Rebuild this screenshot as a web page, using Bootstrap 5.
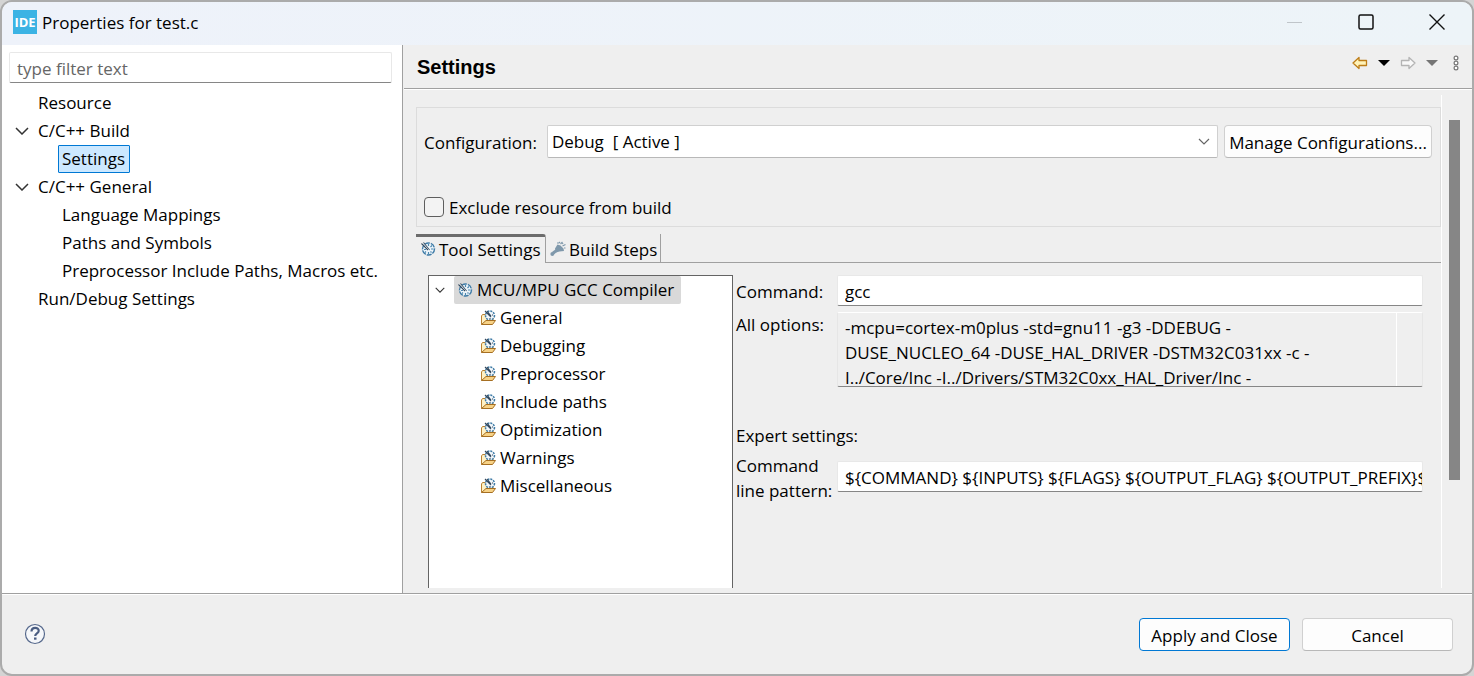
<!DOCTYPE html>
<html lang="en">
<head>
<meta charset="utf-8">
<meta name="viewport" content="width=device-width, initial-scale=1">
<title>Properties for test.c</title>
<link href="https://cdn.jsdelivr.net/npm/bootstrap@5.3.0/dist/css/bootstrap.min.css" rel="stylesheet">
<style>
  body { font-family: "Open Sans", "Noto Sans", sans-serif; font-size: 17px; line-height: 25px; color: #000; background: #d4d4d4; }
  svg { display: block; flex: none; }
  .window { min-height: 100vh; border: 2px solid #ababab; border-radius: 12px; background: #efefef; overflow: hidden; }
  .titlebar { height: 43px; padding: 0 0 3px 11px; background: linear-gradient(90deg, #eef2fa, #edf4f8); }
  .ide-logo { width: 24px; height: 24px; margin-right: 5px; background: #3bb3e4; color: #fff; font: bold 13px/24px "Open Sans", sans-serif; text-align: center; }
  .plain { border: 0; background: none; padding: 0; color: inherit; }
  .win-btn { width: 71px; height: 40px; display: flex; align-items: center; justify-content: center; }
  .sidebar { width: 401px; background: #fff; border-right: 1px solid #a0a0a0; padding: 7px 10px 0 7px; }
  .field { border: 1px solid #e8e8e8; border-bottom-color: #868686; border-radius: 2px; background: #fff; color: #000; width: 100%; height: 31px; padding: 2px 0 0 7px; outline: 0; }
  .field::placeholder { color: #666; opacity: 1; }
  .tree, .tree ul { list-style: none; margin: 0; padding: 0; }
  .pages { padding-top: 6px; }
  .tree-row { height: 28px; display: flex; align-items: center; }
  .tree-row a { color: #000; text-decoration: none; padding: 0 4px; line-height: 28px; white-space: nowrap; }
  .tree-row a.chosen { background: #cce8ff; line-height: 26px; border: 1px solid #0078d4; border-radius: 1px; padding: 0 4px 0 3px; }
  .twisty { width: 25px; padding-left: 1px; display: flex; justify-content: center; }
  .lvl-2 { padding-left: 49px; }
  .pane-head { height: 44px; border-bottom: 1px solid #a0a0a0; box-shadow: 0 1px #fff; padding: 1px 8px 0 13px; margin-left: 1px; }
  .pane-head h1 { font: bold 20px/24px "Liberation Sans", Arial, sans-serif; margin: 0; }
  .content { border-right: 1px solid #fff; margin: 6px 0 5px; padding: 12px 0 0 13px; }
  .group { border: 1px solid #dcdcdc; height: 120px; padding: 17px 8px 0 7px; }
  .group label { padding-top: 2px; }
  .combo { appearance: none; height: 33px; border: 1px solid #d0d0d0; border-bottom-color: #b8b8b8; border-radius: 2px; color: #000; padding: 0 4px; width: 100%; margin: 0 6px 0 10px;
    background: #fff url("data:image/svg+xml,%3Csvg xmlns='http://www.w3.org/2000/svg' width='12' height='8'%3E%3Cpath d='M1 1l5 5 5-5' fill='none' stroke='%23666' stroke-width='1.2'/%3E%3C/svg%3E") no-repeat right 7px center; }
  .push { height: 33px; border: 1px solid #d0d0d0; border-bottom-color: #b8b8b8; border-radius: 4px; background: #fdfdfd; color: #000; padding: 2px 0 0; line-height: 25px; white-space: nowrap; }
  .push-primary { border-color: #0078d4; }
  .w-config { width: 208px; }
  .w-action { width: 151px; }
  .exclude-row { margin-top: 35px; gap: 5px; }
  .tick { appearance: none; width: 20px; height: 20px; border: 1px solid #5e5e5e; border-radius: 4px; background: #f3f3f3; margin: 0; }
  .tabs { height: 29px; margin-top: 7px; }
  .tab { display: flex; align-items: center; gap: 3px; white-space: nowrap; border-right: 1px solid #a0a0a0; border-bottom: 1px solid #a0a0a0; }
  .tab-on { width: 130px; border-top: 3px solid #6c6c6c; border-bottom: 0; border-top-right-radius: 3px; padding: 0 0 2px 4px; }
  .tab-off { width: 115px; padding: 2px 0 0 4px; }
  .tab-rest { border-bottom: 1px solid #a0a0a0; }
  .tool-area { padding: 12px 0 0 12px; }
  .tools { width: 305px; height: 313px; background: #fff; border: 1px solid #646464; border-bottom: 0; }
  .tools .lvl-2 { padding-left: 51px; }
  .tool-root { background: #d9d9d9; border-radius: 2px; height: 28px; width: 227px; padding-left: 3px; }
  .form-grid { display: grid; grid-template-columns: 99px minmax(0, 1fr); column-gap: 2px; padding: 0 18px 0 3px; align-content: start; }
  .opts-label { padding-top: 6px; }
  .options { border: 1px solid #e6e6e6; border-top-color: #fff; border-bottom-color: #868686; border-radius: 2px; height: 75px; margin-top: 6px; }
  .options textarea { border: 0; border-right: 1px solid #fff; background: none; resize: none; overflow: hidden; white-space: pre; padding: 2px 7px 0; outline: 0; color: #000; }
  .options .gutter { width: 25px; }
  .expert { grid-column: 1 / -1; margin: 36px 0 5px; }
  .pattern-cell { padding-top: 8px; }
  .track { width: 30px; padding: 31px 0 0 7px; }
  .thumb { width: 11px; height: 360px; background: #868686; }
  .footer-bar { height: 81px; border-top: 1px solid #a0a0a0; box-shadow: inset 0 1px #fff; padding: 0 19px 0 22px; gap: 12px; }
</style>
</head>
<body>
<svg width="0" height="0" class="position-absolute" aria-hidden="true">
  <symbol id="dial" viewBox="0 0 16 16">
    <circle cx="8.500" cy="8" r="6" fill="#eef5fa" stroke="#3f7ba6" stroke-width="1.400" stroke-dasharray="5 1"/>
    <path d="M8.500 3v2M8.500 11v2.500M4 8.500h2M11 8h2.500M12 4.500l-1.500 1.500M11.500 11.500l-1-1M5 11.500l1-1" stroke="#4b87b0" stroke-width="1.200"/>
    <path d="M1.500 2.500L8 9M3.500 1.500l6 7.500" stroke="#34495e" stroke-width="1.100"/>
    <path d="M2.500 2l7 7.500" stroke="#dce6ee" stroke-width=".6"/>
  </symbol>
  <symbol id="folder" viewBox="0 0 16 16">
    <path d="M1.500 14.500V6l1-1.500h3L7 6h6v4" fill="#fff1c4" stroke="#b98132"/>
    <circle cx="10" cy="5.500" r="4.500" fill="#f2f7fb" stroke="#3f7ba6" stroke-width="1.500" stroke-dasharray="2 1"/>
    <path d="M5 1l6 6M7 1l4 5M10 8v1M12 5h1" stroke="#34495e" stroke-width="1.100"/>
    <path d="M1.500 14.500L6 10.500h9.500l-3 4z" fill="#f7d286" stroke="#a66f22"/>
  </symbol>
  <symbol id="hammer" viewBox="0 0 16 16">
    <circle cx="2.300" cy="13" r="1.900" fill="#7f98ab"/>
    <path d="M2 11l4-3 2 2-4 3.500z" fill="#7f98ab"/>
    <path d="M5 7.500L7.500 3.500l3 1 3 3 .500 2.500-4.500.500-3.500 1z" fill="#7f98ab"/>
    <path d="M7 2h2l1-1M10.500 3l1.500-1.500 1 1.500M12.500 5l3-1.500M14 7h1.500" fill="none" stroke="#7f98ab" stroke-width="1.200"/>
  </symbol>
  <symbol id="chev" viewBox="0 0 14 8"><path d="M1 1l6 6 6-6" fill="none" stroke="#333" stroke-width="1.500"/></symbol>
  <symbol id="arrow" viewBox="0 0 16 14"><path d="M1 7l6-5.500v3h7.500v5H7v3z" stroke-width="1.300" stroke-linejoin="round"/></symbol>
</svg>

<div class="window d-flex flex-column">
  <header class="titlebar d-flex align-items-center">
    <div class="ide-logo">IDE</div>
    <span class="me-auto">Properties for test.c</span>
    <button class="plain win-btn" aria-label="Minimize"><svg width="16" height="16"><path d="M0 8.500h15" stroke="#c0c5ca"/></svg></button>
    <button class="plain win-btn" aria-label="Maximize"><svg width="16" height="16"><rect x="1" y="1" width="14" height="14" rx="1.500" fill="none" stroke="#111" stroke-width="1.500"/></svg></button>
    <button class="plain win-btn" aria-label="Close"><svg width="16" height="16"><path d="M.500 .500l15 15M15.500 .500l-15 15" stroke="#111" stroke-width="1.400"/></svg></button>
  </header>

  <div class="d-flex flex-grow-1">
    <nav class="sidebar flex-shrink-0" aria-label="Property pages">
      <input class="field" type="text" placeholder="type filter text" aria-label="Filter">
      <ul class="tree pages">
        <li class="tree-row"><span class="twisty"></span><a href="#">Resource</a></li>
        <li>
          <div class="tree-row"><span class="twisty"><svg width="14" height="8"><use href="#chev"/></svg></span><a href="#">C/C++ Build</a></div>
          <ul><li class="tree-row lvl-2"><a href="#" class="chosen">Settings</a></li></ul>
        </li>
        <li>
          <div class="tree-row"><span class="twisty"><svg width="14" height="8"><use href="#chev"/></svg></span><a href="#">C/C++ General</a></div>
          <ul>
            <li class="tree-row lvl-2"><a href="#">Language Mappings</a></li>
            <li class="tree-row lvl-2"><a href="#">Paths and Symbols</a></li>
            <li class="tree-row lvl-2"><a href="#">Preprocessor Include Paths, Macros etc.</a></li>
          </ul>
        </li>
        <li class="tree-row"><span class="twisty"></span><a href="#">Run/Debug Settings</a></li>
      </ul>
    </nav>

    <main class="flex-grow-1 d-flex flex-column">
      <div class="pane-head d-flex align-items-center">
        <h1 class="me-auto">Settings</h1>
        <div class="d-flex align-items-center pb-2">
          <button class="plain" aria-label="Back"><svg width="16" height="14" fill="#fff3b8" stroke="#bd7d18"><use href="#arrow"/></svg></button>
          <button class="plain ms-2" aria-label="Back history"><svg width="16" height="8"><path d="M2 1h12L8 7z"/></svg></button>
          <button class="plain ms-2" aria-label="Forward"><svg width="16" height="14" fill="#f8f8f8" stroke="#b4b4b4"><g transform="matrix(-1 0 0 1 16 0)"><use href="#arrow"/></g></svg></button>
          <button class="plain ms-2" aria-label="Forward history"><svg width="16" height="8"><path d="M2 1h12L8 7z" fill="#757575"/></svg></button>
          <button class="plain ms-2" aria-label="Menu"><svg width="16" height="16" fill="#fff" stroke="#777" stroke-width="1.200"><circle cx="8" cy="3" r="1.900"/><circle cx="8" cy="8" r="1.900"/><circle cx="8" cy="13" r="1.900"/></svg></button>
        </div>
      </div>

      <div class="d-flex flex-grow-1">
        <div class="content flex-grow-1">
          <div class="group">
            <div class="d-flex align-items-center">
              <label for="config" class="text-nowrap">Configuration:</label>
              <select id="config" class="combo"><option>Debug &nbsp;[ Active ]</option></select>
              <button class="push w-config flex-shrink-0">Manage Configurations...</button>
            </div>
            <div class="d-flex align-items-center exclude-row">
              <input class="tick" type="checkbox" id="exclude">
              <label for="exclude">Exclude resource from build</label>
            </div>
          </div>

          <div class="tabs d-flex" role="tablist">
            <button class="plain tab tab-on" role="tab" aria-selected="true"><svg width="16" height="16"><use href="#dial"/></svg>Tool Settings</button>
            <button class="plain tab tab-off" role="tab"><svg width="16" height="16"><use href="#hammer"/></svg>Build Steps</button>
            <div class="tab-rest flex-grow-1"></div>
          </div>

          <div class="d-flex tool-area">
            <div class="tools flex-shrink-0">
              <ul class="tree">
                <li>
                  <div class="tree-row"><span class="twisty pe-1"><svg width="10" height="6"><use href="#chev"/></svg></span><div class="tool-root d-flex align-items-center"><svg width="16" height="16"><use href="#dial"/></svg><a href="#">MCU/MPU GCC Compiler</a></div></div>
                  <ul>
                    <li class="tree-row lvl-2"><svg width="16" height="16"><use href="#folder"/></svg><a href="#">General</a></li>
                    <li class="tree-row lvl-2"><svg width="16" height="16"><use href="#folder"/></svg><a href="#">Debugging</a></li>
                    <li class="tree-row lvl-2"><svg width="16" height="16"><use href="#folder"/></svg><a href="#">Preprocessor</a></li>
                    <li class="tree-row lvl-2"><svg width="16" height="16"><use href="#folder"/></svg><a href="#">Include paths</a></li>
                    <li class="tree-row lvl-2"><svg width="16" height="16"><use href="#folder"/></svg><a href="#">Optimization</a></li>
                    <li class="tree-row lvl-2"><svg width="16" height="16"><use href="#folder"/></svg><a href="#">Warnings</a></li>
                    <li class="tree-row lvl-2"><svg width="16" height="16"><use href="#folder"/></svg><a href="#">Miscellaneous</a></li>
                  </ul>
                </li>
              </ul>
            </div>
            <div class="form-grid flex-grow-1">
              <label for="cmd" class="pt-1">Command:</label>
              <input id="cmd" class="field" type="text" value="gcc">
              <label for="opts" class="opts-label">All options:</label>
              <div class="options d-flex">
                <textarea id="opts" class="flex-grow-1" readonly>-mcpu=cortex-m0plus -std=gnu11 -g3 -DDEBUG -
DUSE_NUCLEO_64 -DUSE_HAL_DRIVER -DSTM32C031xx -c -
I../Core/Inc -I../Drivers/STM32C0xx_HAL_Driver/Inc -</textarea>
                <div class="gutter"></div>
              </div>
              <div class="expert">Expert settings:</div>
              <label for="pattern">Command line pattern:</label>
              <div class="pattern-cell"><input id="pattern" class="field" type="text" value="${COMMAND} ${INPUTS} ${FLAGS} ${OUTPUT_FLAG} ${OUTPUT_PREFIX}${OUTPUT}"></div>
            </div>
          </div>
        </div>
        <div class="track"><div class="thumb"></div></div>
      </div>
    </main>
  </div>

  <footer class="footer-bar d-flex align-items-center">
    <button class="plain me-auto" aria-label="Help"><svg width="22" height="22"><circle cx="11" cy="11" r="9.500" fill="#f5f7fa" stroke="#56698c" stroke-width="1.200"/><path d="M7.500 8.500c0-5 7.500-4.500 7.200-.500-.200 2.500-3.500 2.500-3.500 5" fill="none" stroke="#4a5d82" stroke-width="2.200"/><rect x="10" y="14.500" width="2.500" height="2.200" fill="#4a5d82"/></svg></button>
    <button class="push push-primary w-action">Apply and Close</button>
    <button class="push w-action">Cancel</button>
  </footer>
</div>
<script src="https://cdn.jsdelivr.net/npm/bootstrap@5.3.0/dist/js/bootstrap.bundle.min.js"></script>
</body>
</html>
